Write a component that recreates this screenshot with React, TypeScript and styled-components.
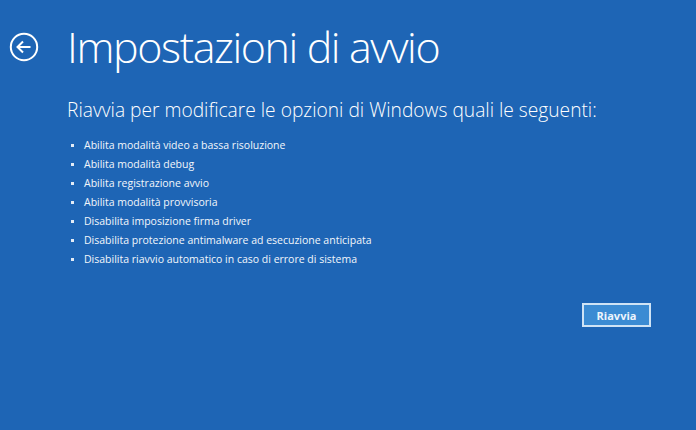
import React from 'react';
import styled, { createGlobalStyle } from 'styled-components';

const GlobalStyle = createGlobalStyle`
  html, body {
    margin: 0;
    padding: 0;
    background: #1e65b5;
  }
  body {
    font-family: "Open Sans", "Noto Sans", sans-serif;
    color: #fff;
  }
`;

const options = [
  'Abilita modalità video a bassa risoluzione',
  'Abilita modalità debug',
  'Abilita registrazione avvio',
  'Abilita modalità provvisoria',
  'Disabilita imposizione firma driver',
  'Disabilita protezione antimalware ad esecuzione anticipata',
  'Disabilita riavvio automatico in caso di errore di sistema',
];

const BackIcon = () => (
  <svg width="30" height="30" viewBox="0 0 30 30" fill="none">
    <circle cx="15" cy="15" r="13.2" stroke="#fff" strokeWidth="2" />
    <path d="M8.5 15h13M14 9.5L8.5 15l5.5 5.5" stroke="#fff" strokeWidth="2" />
  </svg>
);

export default function App() {
  return (
    <>
      <GlobalStyle />
      <Screen>
        <Header>
          <BackButton aria-label="Indietro">
            <BackIcon />
          </BackButton>
          <Title>Impostazioni di avvio</Title>
        </Header>
        <Content>
          <Lead>Riavvia per modificare le opzioni di Windows quali le seguenti:</Lead>
          <OptionList>
            {options.map(label => (
              <Option key={label}>{label}</Option>
            ))}
          </OptionList>
          <Actions>
            <RestartButton>Riavvia</RestartButton>
          </Actions>
        </Content>
      </Screen>
    </>
  );
}

const Screen = styled.div`
  width: 696px;
  height: 430px;
  background: #1e65b5;
  overflow: hidden;
`;

const Header = styled.div`
  display: flex;
  align-items: center;
  padding: 14px 0 0 9px;
  height: 64px;
`;

const BackButton = styled.button`
  display: flex;
  background: none;
  border: 0;
  padding: 0;
  margin: 2px 28px 0 0;
  cursor: pointer;
`;

const Title = styled.h1`
  margin: 0;
  font-weight: 300;
  font-size: 43px;
  letter-spacing: -1.4px;
  line-height: 1;
  color: #fff;
`;

const Content = styled.div`
  padding: 18px 0 0 67px;
  width: 584px;
`;

const Lead = styled.p`
  margin: 0;
  font-weight: 300;
  font-size: 19.2px;
  line-height: 28px;
  white-space: nowrap;
`;

const OptionList = styled.ul`
  list-style: none;
  margin: 12px 0 0;
  padding: 0 0 0 3px;
`;

const Option = styled.li`
  position: relative;
  padding-left: 14px;
  font-size: 10.5px;
  line-height: 19px;
  color: #f2f6fb;

  &::before {
    content: '';
    position: absolute;
    left: 1px;
    top: 8px;
    width: 3px;
    height: 3px;
    background: #e4ecf6;
  }
`;

const Actions = styled.div`
  display: flex;
  justify-content: flex-end;
  margin-top: 34px;
`;

const RestartButton = styled.button`
  width: 69px;
  height: 24px;
  background: #3b8bd3;
  border: 2px solid #cfe3f5;
  color: #eef5fc;
  font-family: "Open Sans", sans-serif;
  font-weight: 700;
  font-size: 11px;
  padding: 0;
  cursor: pointer;
`;
